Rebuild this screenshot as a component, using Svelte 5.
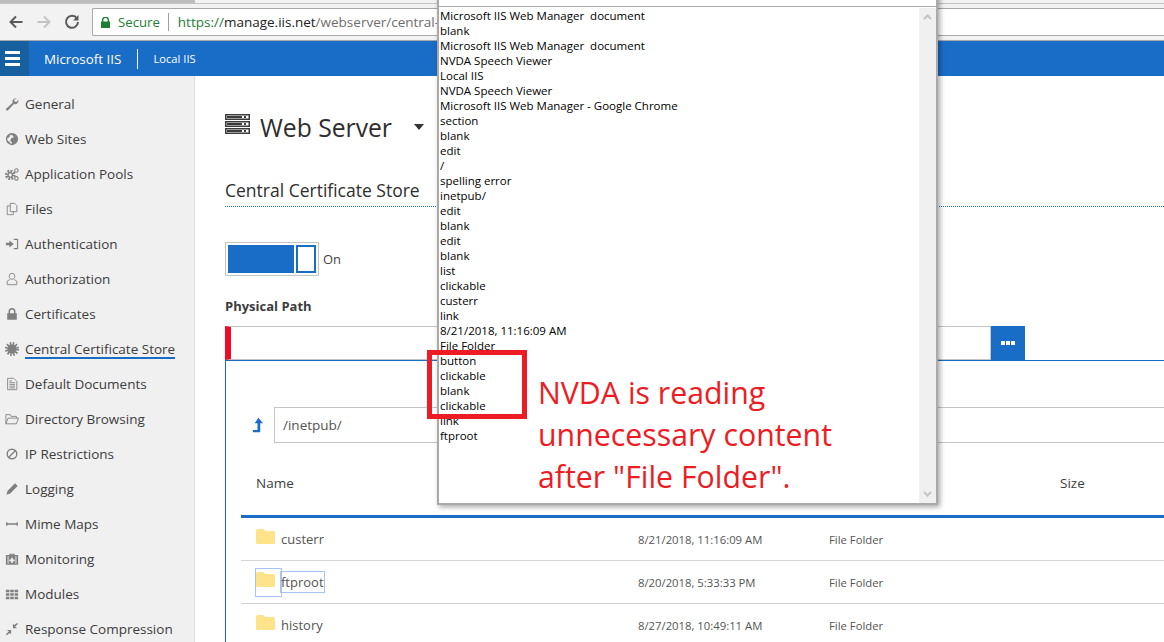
<script>
  const icons = {
    general: 'M13.5 1.5a4 4 0 0 0-4.8 5L1.6 13.2a1.3 1.3 0 0 0 1.9 1.9l6.7-7a4 4 0 0 0 5-4.9L13 5.6l-2.1-.6-.5-2z',
    sites: 'M8 1a7 7 0 1 0 0 14A7 7 0 0 0 8 1zM6 3l3 1 1 2-3 1-1 3 2 2-1 2-2-3-2-1-.5-3L5 6z',
    auth: 'M1 6.500h4V4l5 4-5 4V9.500H1zM10 2h5v12h-5v-1.300h3.700V3.300H10z',
    lock: 'M4 7V5a4 4 0 0 1 8 0v2h1.500v7.500h-11V7zm1.800 0h4.400V5a2.200 2.200 0 0 0-4.400 0z',
    log: 'M11.500 1.500l3 3L6 13l-4.500 1.500L3 10z',
    grid: 'M1 3h4v3H1zM6 3h4v3H6zM11 3h4v3h-4zM1 7h4v3H1zM6 7h4v3H6zM11 7h4v3h-4zM1 11h4v3H1zM6 11h4v3H6zM11 11h4v3h-4z',
    monitor: 'M5 3.500V2h6v1.500h4v11H1v-11zM6.500 3.500h3V3h-3zM3 4.500v9h1v-9zM12 4.500v9h1v-9zM7 6.500v2H5v2h2v2h2v-2h2v-2H9v-2z',
    compress: 'M14 1l1 1-3.500 3.500L14 7H9V2l1.500 1.500zM2 15l-1-1 3.500-3.500L2 9h5v5l-1.500-1.500z'
  };

  const nav = [
    { name: 'General', icon: 'general' },
    { name: 'Web Sites', icon: 'sites' },
    { name: 'Application Pools', gears: true },
    { name: 'Files', line: 'M6 1.500h5l2.500 2.500v7H6zM6 4.500H2.500v10h7V11' },
    { name: 'Authentication', icon: 'auth' },
    { name: 'Authorization', line: 'M8 1.500a3.200 3.200 0 0 1 3.200 3.200c0 2-1 3.500-3.200 3.500S4.800 6.700 4.800 4.700A3.200 3.200 0 0 1 8 1.500zM5.500 8.500L2.500 10.500v4h11v-4l-3-2' },
    { name: 'Certificates', icon: 'lock' },
    { name: 'Central Certificate Store', burst: true, active: true },
    { name: 'Default Documents', line: 'M3 1.500h7l3.500 3.500v9.500H3zM5 6.500h6.500M5 8.500h6.500M5 10.500h6.500M5 12.500h6.500M5 4.500h3' },
    { name: 'Directory Browsing', line: 'M1 13.500V3h5l1 2h6v2M1 13.500L3.500 7H15.500L13 13.500z' },
    { name: 'IP Restrictions', line: 'M8 2.500a5.500 5.500 0 1 0 0 11 5.500 5.500 0 0 0 0-11zM4.500 11.500l7-7', heavy: true },
    { name: 'Logging', icon: 'log' },
    { name: 'Mime Maps', line: 'M2 8h12M2 6v4M14 6v4', heavy: true },
    { name: 'Monitoring', icon: 'monitor' },
    { name: 'Modules', icon: 'grid' },
    { name: 'Response Compression', icon: 'compress' }
  ];

  const files = [
    { name: 'custerr', date: '8/21/2018, 11:16:09 AM' },
    { name: 'ftproot', date: '8/20/2018, 5:33:33 PM', focus: true },
    { name: 'history', date: '8/27/2018, 10:49:11 AM' }
  ];

  const speech = [
    'Microsoft IIS Web Manager  document', 'blank', 'Microsoft IIS Web Manager  document',
    'NVDA Speech Viewer', 'Local IIS', 'NVDA Speech Viewer', 'Microsoft IIS Web Manager - Google Chrome',
    'section', 'blank', 'edit', '/', 'spelling error', 'inetpub/', 'edit', 'blank', 'edit', 'blank',
    'list', 'clickable', 'custerr', 'link', '8/21/2018, 11:16:09 AM', 'File Folder', 'button',
    'clickable', 'blank', 'clickable', 'link', 'ftproot'
  ];
</script>

<div class="page">
  <div class="tabstrip"><span class="tab"></span></div>
  <div class="toolbar">
    <svg class="nav-btn" viewBox="0 0 16 16"><path d="M14.500 8H2.500M8 2.500L2.500 8 8 13.500" /></svg>
    <svg class="nav-btn off" viewBox="0 0 16 16"><path d="M1.500 8h12M8 2.500L13.500 8 8 13.500" /></svg>
    <svg class="nav-btn" viewBox="0 0 16 16"><path d="M13 4.500A6 6 0 1 0 14 8" /><path class="fill" d="M14.500 1v5.500H9z" /></svg>
    <div class="omnibox">
      <svg class="padlock" viewBox="0 0 10 12"><path d="M1 5V3.500a4 4 0 0 1 8 0V5h1v7H0V5zm1.600 0h4.800V3.500a2.400 2.400 0 0 0-4.800 0z" /></svg>
      <span class="secure">Secure</span>
      <span class="url"><span class="scheme">https://</span><b>manage.iis.net</b>/webserver/central-</span>
    </div>
  </div>

  <header class="topbar">
    <div class="burger"><i></i><i></i><i></i></div>
    <span class="brand">Microsoft IIS</span>
    <span class="server">Local IIS</span>
  </header>

  <div class="body">
    <nav class="sidebar">
      {#each nav as item}
        <div class="nav-item">
          <svg viewBox="0 0 16 16" class="nav-icon">
            {#if item.gears}
              <circle class="teeth" cx="6" cy="9" r="4.500" />
              <circle class="ring" cx="6" cy="9" r="2.500" />
              <circle class="ring thin" cx="13" cy="4" r="2" />
              <circle class="ring thin" cx="13" cy="13" r="2" />
            {:else if item.burst}
              <circle class="burst" cx="8" cy="8" r="6.500" />
              <circle cx="8" cy="8" r="5.500" />
            {:else if item.line}
              <path class="outline" class:heavy={item.heavy} d={item.line} />
            {:else}
              <path d={icons[item.icon]} fill-rule="evenodd" />
            {/if}
          </svg>
          <span class:active={item.active}>{item.name}</span>
        </div>
      {/each}
    </nav>

    <main class="content">
      <div class="title-row">
        <svg class="server-icon" viewBox="0 0 25 20">
          <path d="M0 0h25v6H0zM1.500 1.500v3h22v-3zM0 7h25v6H0zM1.500 8.500v3h22v-3zM0 14h25v6H0zM1.500 15.500v3h22v-3zM2 2h15v2H2zM2 9h15v2H2zM2 16h15v2H2zM19 2h2v2h-2zM19 9h2v2h-2zM19 16h2v2h-2z" fill-rule="evenodd" />
        </svg>
        <h1>Web Server</h1>
        <span class="caret"></span>
      </div>

      <h2>Central Certificate Store</h2>

      <div class="switch-row">
        <div class="switch"><span class="track"></span><span class="thumb"></span></div>
        <span>On</span>
      </div>

      <label for="path">Physical Path</label>
      <div class="path-row">
        <input id="path" type="text" />
        <button aria-label="Browse"><i></i><i></i><i></i></button>
      </div>

      <section class="explorer">
        <div class="crumbs">
          <svg class="up" viewBox="0 0 12 16"><path d="M7 0l5 6H9v10H1v-2.500h5V6H3z" /></svg>
          <div class="crumb-input">/inetpub/</div>
        </div>

        <div class="row head">
          <span>Name</span>
          <span></span>
          <span></span>
          <span>Size</span>
        </div>
        {#each files as f}
          <div class="row file">
            <span class="file-name" class:focus={f.focus}>
              <span class="folder">
                <svg viewBox="0 0 19 15"><path d="M1.500 0h6l1.500 2h8.500A1.500 1.500 0 0 1 19 3.500v10a1.500 1.500 0 0 1-1.500 1.500h-16A1.500 1.500 0 0 1 0 13.500v-12A1.500 1.500 0 0 1 1.500 0z" /></svg>
              </span>
              <span class="label">{f.name}</span>
            </span>
            <span class="small">{f.date}</span>
            <span class="small">File Folder</span>
            <span></span>
          </div>
        {/each}
      </section>
    </main>
  </div>

  <!-- speech viewer window sits on top of the page -->
  <div class="viewer">
    <div class="viewer-text">
      {#each speech as line}
        <div>{line}</div>
      {/each}
    </div>
    <div class="scrollbar">
      <svg viewBox="0 0 9 6"><path d="M1 5l3.500-3.500L8 5" /></svg>
      <svg viewBox="0 0 9 6"><path d="M1 1l3.500 3.500L8 1" /></svg>
    </div>
  </div>
  <div class="callout-box"></div>
  <p class="callout">NVDA is reading<br />unnecessary content<br />after "File Folder".</p>
</div>

<style>
  :global(body) {
    margin: 0;
    background: #fff;
    overflow: hidden;
  }

  .page {
    position: relative;
    width: 1164px;
    height: 642px;
    overflow: hidden;
    font-family: "Open Sans", "Noto Sans", sans-serif;
    color: #333;
  }

  .tabstrip {
    height: 3px;
    background: #f2f2f2;
    border-bottom: 1px solid #c4c4c4;
  }

  .tab {
    display: block;
    width: 195px;
    height: 3px;
    background: #bdbdbd;
  }

  .toolbar {
    height: 37px;
    box-sizing: border-box;
    padding: 4px 0 4px 8px;
    background: #f2f2f2;
    border-bottom: 1px solid #a8a8a8;
    display: flex;
    align-items: center;
    gap: 12px;
  }

  .nav-btn {
    width: 16px;
    height: 16px;
    fill: none;
    stroke: #5a5a5a;
    stroke-width: 2;
    flex: none;
  }

  .nav-btn.off {
    stroke: #c4c4c4;
  }

  .nav-btn .fill {
    fill: #5a5a5a;
    stroke: none;
  }

  .omnibox {
    flex: 1;
    height: 28px;
    box-sizing: border-box;
    background: #fff;
    border: 1px solid #a9a9a9;
    border-right: none;
    border-radius: 2px 0 0 2px;
    display: flex;
    align-items: center;
    padding-left: 8px;
    white-space: nowrap;
    overflow: hidden;
  }

  .padlock {
    width: 9px;
    height: 11px;
    fill: #1e7e34;
    margin-right: 8px;
  }

  .secure {
    color: #1e7e34;
    font-size: 13.2px;
    padding-right: 8px;
    border-right: 1px solid #a0a0a0;
    margin-right: 9px;
  }

  .url {
    color: #6d6d6d;
    font-size: 13.5px;
  }

  .url b {
    color: #222;
    font-weight: 400;
  }

  .scheme {
    color: #1e7e34;
  }

  .topbar {
    height: 35px;
    background: #1a6dc6;
    color: #fff;
    display: flex;
    align-items: center;
  }

  .burger {
    width: 29px;
    height: 100%;
    box-sizing: border-box;
    background: #17609f;
    display: flex;
    flex-direction: column;
    justify-content: center;
    gap: 3px;
    padding: 0 9px 0 5px;
    margin-right: 15px;
  }

  .burger i {
    display: block;
    height: 3px;
    background: #fff;
  }

  .brand {
    font-size: 13.4px;
    padding-right: 16px;
    border-right: 1px solid #fff;
    line-height: 20px;
  }

  .server {
    font-size: 11.2px;
    margin-left: 15px;
  }

  .body {
    display: flex;
    height: 566px;
  }

  .sidebar {
    width: 195px;
    flex: none;
    box-sizing: border-box;
    background: #f0f0f0;
    border-right: 1px solid #ddd;
    padding-top: 10px;
  }

  .nav-item {
    height: 35px;
    display: flex;
    align-items: center;
    gap: 6px;
    padding-left: 5px;
    font-size: 13.5px;
    color: #3d3d3d;
    white-space: nowrap;
  }

  .nav-icon {
    width: 14px;
    height: 14px;
    flex: none;
    fill: #808080;
  }

  .outline {
    fill: none;
    stroke: #808080;
    stroke-width: 1;
  }

  .outline.heavy {
    stroke-width: 1.6;
  }

  .teeth {
    fill: none;
    stroke: #808080;
    stroke-width: 3;
    stroke-dasharray: 2 1.5;
  }

  .ring {
    fill: none;
    stroke: #808080;
    stroke-width: 1.5;
  }

  .ring.thin {
    stroke-width: 1.2;
  }

  .burst {
    fill: none;
    stroke: #808080;
    stroke-width: 3;
    stroke-dasharray: 1.8 1.6;
  }

  .active {
    border-bottom: 2px solid #1a6dc6;
    line-height: 16px;
    margin-top: 2px;
  }

  .content {
    flex: 1;
    min-width: 0;
    padding: 35px 0 0 30px;
  }

  .title-row {
    display: flex;
    align-items: center;
    height: 32px;
  }

  .server-icon {
    width: 25px;
    height: 20px;
    fill: #3c3c3c;
    margin: -6px 10px 0 0;
  }

  h1 {
    margin: 0;
    font-size: 24.7px;
    font-weight: 400;
    color: #2e2e2e;
  }

  .caret {
    width: 0;
    height: 0;
    margin: 0 0 0 22px;
    border: 5.5px solid transparent;
    border-top: 6px solid #333;
    border-bottom: none;
  }

  h2 {
    margin: 35px 0 0;
    height: 29px;
    box-sizing: border-box;
    font-size: 17.5px;
    font-weight: 400;
    color: #2e2e2e;
    line-height: 24px;
    border-bottom: 1px dotted #1a6dc6;
  }

  .switch-row {
    display: flex;
    align-items: center;
    gap: 4px;
    margin-top: 35px;
    font-size: 13px;
    color: #444;
  }

  .switch {
    width: 94px;
    height: 34px;
    box-sizing: border-box;
    border: 1px solid #c4c4c4;
    padding: 2px;
    display: flex;
    gap: 2px;
  }

  .track {
    flex: 1;
    background: #1a6dc6;
  }

  .thumb {
    width: 20px;
    box-sizing: border-box;
    border: 2px solid #1a6dc6;
  }

  label {
    display: block;
    margin-top: 20px;
    height: 30px;
    line-height: 20px;
    font-size: 13px;
    font-weight: 700;
    color: #3c3c3c;
  }

  .path-row {
    display: flex;
    height: 34px;
  }

  .path-row input {
    width: 766px;
    box-sizing: border-box;
    height: 34px;
    margin: 0;
    background: #fff;
    border: 1px solid #c4c4c4;
    border-left: 6px solid #f00a23;
    outline: none;
    padding: 0;
  }

  .path-row button {
    width: 34px;
    height: 34px;
    padding: 0;
    border: none;
    background: #1a6dc6;
    display: flex;
    align-items: center;
    justify-content: center;
    gap: 1px;
  }

  .path-row button i {
    width: 4px;
    height: 4px;
    background: #fff;
  }

  .explorer {
    border-top: 1px solid #1a6dc6;
    border-left: 1px solid #1a6dc6;
    padding-left: 15px;
    height: 300px;
  }

  .crumbs {
    margin: 46px 0 0 -15px;
    display: flex;
    height: 36px;
    padding-left: 26px;
    align-items: center;
  }

  .up {
    width: 11px;
    height: 16px;
    fill: #1a6dc6;
    margin-right: 11px;
    flex: none;
  }

  .crumb-input {
    align-self: stretch;
    flex: 1;
    box-sizing: border-box;
    border: 1px solid #c4c4c4;
    border-right: none;
    padding-left: 8px;
    line-height: 34px;
    font-size: 13.5px;
    color: #555;
  }

  .row {
    display: grid;
    grid-template-columns: 382px 191px 231px 1fr;
    align-items: center;
    padding-left: 15px;
    margin-right: -1px;
  }

  .head {
    height: 64px;
    padding-top: 8px;
    border-bottom: 3px solid #1a6dc6;
    font-size: 13.5px;
    color: #3d3d3d;
  }

  .file {
    height: 43px;
    font-size: 13px;
    color: #555;
    border-bottom: 1px solid #d4d4d4;
    box-sizing: border-box;
  }

  .file-name {
    display: flex;
    align-items: center;
    gap: 6px;
    width: fit-content;
  }

  .folder {
    display: flex;
    align-items: center;
  }

  .folder svg {
    width: 19px;
    height: 15px;
    margin-top: -5px;
    fill: #fde38a;
  }

  .file-name.focus {
    gap: 0;
  }

  .file-name.focus .folder {
    width: 25px;
    height: 27px;
    box-shadow: 0 0 0 1px #a9c3f5;
  }

  .file-name.focus .label {
    line-height: 20px;
    box-shadow: 0 0 0 1px #a9c3f5;
  }

  .small {
    font-size: 11.3px;
    color: #555;
  }

  .viewer {
    position: absolute;
    left: 437px;
    top: -10px;
    width: 501px;
    height: 515px;
    box-sizing: border-box;
    background: #fff;
    border: 2px solid #aaa;
    box-shadow: 2px 2px 5px rgba(0, 0, 0, 0.35);
    display: flex;
    padding-top: 16px;
    font-size: 11.5px;
    color: #000;
  }

  .viewer::before {
    content: "";
    position: absolute;
    left: 0;
    right: 0;
    top: 14px;
    height: 1px;
    background: #aaa;
  }

  .viewer-text {
    flex: 1;
    padding-left: 1px;
    line-height: 15px;
    white-space: pre;
  }

  .scrollbar {
    width: 17px;
    background: #f0f0f0;
    display: flex;
    flex-direction: column;
    justify-content: space-between;
    align-items: center;
    padding: 6px 0;
    box-sizing: border-box;
  }

  .scrollbar svg {
    width: 9px;
    height: 6px;
    fill: none;
    stroke: #c4c4c4;
    stroke-width: 2;
  }

  .callout-box {
    position: absolute;
    left: 427px;
    top: 350px;
    width: 100px;
    height: 69px;
    box-sizing: border-box;
    border: 5px solid #ed1c24;
  }

  .callout {
    position: absolute;
    left: 538px;
    top: 372px;
    margin: 0;
    font-size: 30.3px;
    line-height: 42px;
    color: #ed1c24;
    white-space: nowrap;
  }
</style>
